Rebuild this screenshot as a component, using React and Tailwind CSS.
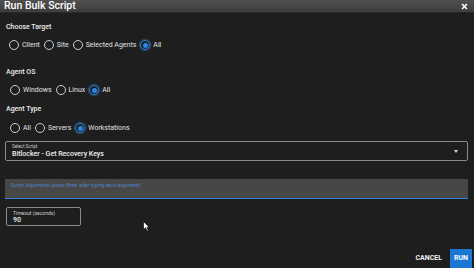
const font = { fontFamily: "Roboto, 'Noto Sans', sans-serif" };

function Radio({ label, checked }) {
  return (
    <div className="flex items-center">
      {checked ? (
        <span className="w-[10px] h-[10px] rounded-full border-[1.5px] border-[#2f86e0] flex items-center justify-center shadow-[0_0_0_1.5px_rgba(47,134,224,0.3)]">
          <span className="w-[5px] h-[5px] rounded-full bg-[#2f86e0]" />
        </span>
      ) : (
        <span className="w-[10px] h-[10px] rounded-full border-[1.5px] border-[#cfcfcf]" />
      )}
      <span className="ml-[3px] mr-[4px] text-[7px] leading-none text-[#e2e2e2]">{label}</span>
    </div>
  );
}

function Heading({ title, className }) {
  return <div className={"text-[7px] leading-[10px] font-medium text-[#ececec] " + className}>{title}</div>;
}

export default function App() {
  return (
    <div style={font} className="relative w-[474px] h-[268px] bg-[#1e1e1e] flex flex-col overflow-hidden">
      <div className="h-[13px] flex items-center justify-between pl-[4px] pr-[6px] bg-gradient-to-b from-[#505050] to-[#3d3d3d] border-b border-[#2a2a2a]">
        <span className="text-[10.5px] leading-none font-medium text-white">Run Bulk Script</span>
        <svg width="7" height="7" viewBox="0 0 10 10">
          <path d="M1.5 1.5 L8.5 8.5 M8.5 1.5 L1.5 8.5" stroke="#fff" strokeWidth="2.2" />
        </svg>
      </div>

      <div className="flex flex-col px-[6px]">
        <Heading title="Choose Target" className="mt-[9px]" />
        <div className="flex items-center mt-[7px] h-[12px] pl-[3px]">
          <Radio label="Client" />
          <Radio label="Site" />
          <Radio label="Selected Agents" />
          <Radio label="All" checked />
        </div>

        <Heading title="Agent OS" className="mt-[16px]" />
        <div className="flex items-center mt-[7px] h-[12px] pl-[4px]">
          <Radio label="Windows" />
          <Radio label="Linux" />
          <Radio label="All" checked />
        </div>

        <Heading title="Agent Type" className="mt-[8px]" />
        <div className="flex items-center mt-[8px] h-[12px] pl-[4px]">
          <Radio label="All" />
          <Radio label="Servers" />
          <Radio label="Workstations" checked />
        </div>

        <div className="mt-[7px] h-[20px] w-[463px] -ml-[1px] rounded-[2px] border border-[#8a8a8a] flex items-center justify-between pl-[6px] pr-[9px]">
          <div className="flex flex-col">
            <span className="text-[4.5px] leading-[6px] text-[#cfcfcf]">Select Script</span>
            <span className="text-[7px] leading-[8px] text-[#f0f0f0] font-medium">Bitlocker - Get Recovery Keys</span>
          </div>
          <span className="w-0 h-0 border-l-[2.5px] border-r-[2.5px] border-t-[3px] border-l-transparent border-r-transparent border-t-[#d8d8d8]" />
        </div>

        <div className="mt-[18px] h-[20px] w-[463px] -ml-[1px] bg-[#474747] border-b-[1.5px] border-[#2f80d8] flex items-start pl-[6px] pt-[4px]">
          <span className="text-[5px] leading-none text-[#4d82c4]">Script Arguments (press Enter after typing each argument)</span>
        </div>

        <div className="mt-[8px] h-[19px] w-[75px] rounded-[2px] border border-[#8a8a8a] flex flex-col justify-center pl-[6px]">
          <span className="text-[5px] leading-[6px] text-[#cfcfcf]">Timeout (seconds)</span>
          <span className="text-[7px] leading-[8px] text-[#f0f0f0] font-medium">90</span>
        </div>
      </div>

      <div className="flex-1" />
      <div className="flex items-center justify-end pr-[2px]">
        <span className="text-[7px] leading-none font-bold text-[#f2f2f2] mr-[8px]">CANCEL</span>
        <div className="w-[22px] h-[19px] bg-[#1976d2] flex items-center justify-center">
          <span className="text-[7px] leading-none font-bold text-white">RUN</span>
        </div>
      </div>

      <svg className="absolute left-[143px] top-[221px]" width="7" height="11" viewBox="0 0 7 11">
        <path d="M0.5 0.5 L0.5 8.5 L2.5 6.8 L4 10 L5.3 9.4 L3.9 6.3 L6.3 6.3 Z" fill="#fff" stroke="#111" strokeWidth="0.7" />
      </svg>
    </div>
  );
}
